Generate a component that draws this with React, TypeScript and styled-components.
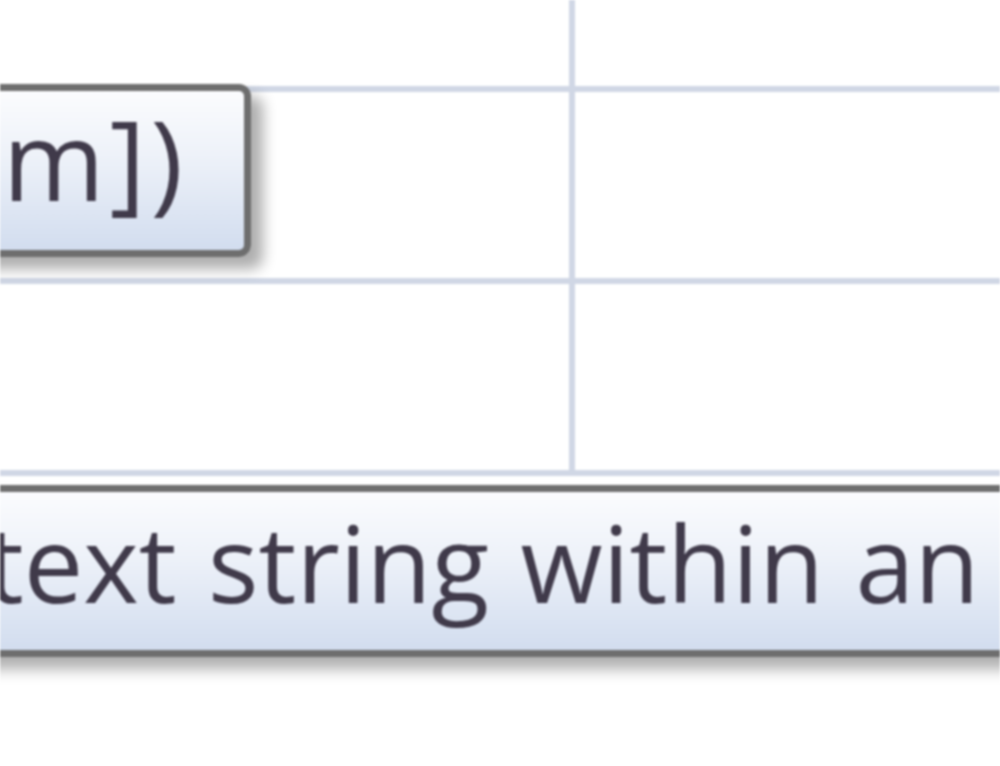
import styled, { createGlobalStyle } from 'styled-components';

const GlobalStyle = createGlobalStyle`
html, body {
  margin: 0;
  padding: 0;
  background: #ffffff;
  overflow: hidden;
}
`;

const Stage = styled.div`
position: relative;
width: 1000px;
height: 766px;
overflow: hidden;
background: #ffffff;
filter: blur(1px);
`;

const Sheet = styled.div`
display: grid;
grid-template-columns: 575px 1fr;
grid-auto-rows: 192px;
margin-top: -100px;
`;

const Cell = styled.div<{ $last?: boolean }>`
box-sizing: border-box;
border-bottom: 6px solid #d0d7e5;
border-right: ${(p) => (p.$last ? 'none' : '6px solid #d0d7e5')};
`;

const Tip = styled.div<{ $top: number; $width: number; $height: number; $round?: boolean }>`
position: absolute;
left: -40px;
top: ${(p) => p.$top}px;
width: ${(p) => p.$width}px;
height: ${(p) => p.$height}px;
box-sizing: border-box;
border: 7px solid #6e6e6e;
border-radius: ${(p) => (p.$round ? '12px' : '0')};
background: linear-gradient(to bottom, #fbfcfe 0%, #eef2f9 40%, #d2ddef 100%);
box-shadow: 12px 12px 14px rgba(0, 0, 0, 0.32);
font-family: "Open Sans", "Noto Sans", sans-serif;
color: #403a4a;
line-height: 1;
white-space: nowrap;
overflow: hidden;
`;

const ArgText = styled.div`
font-size: 110px;
letter-spacing: 5px;
text-align: right;
padding: 12px 56px 0 0;
`;

const HintText = styled.div`
font-size: 106px;
word-spacing: 4px;
padding: 17px 0 0 19px;
`;

const rows = [0, 1, 2];

const App = () => {
  return (
    <>
      <GlobalStyle />
      <Stage>
        <Sheet>
          {rows.map((r) => (
            <>
              <Cell key={`a${r}`} />
              <Cell key={`b${r}`} $last />
            </>
          ))}
        </Sheet>
        <Tip $top={84} $width={291} $height={173} $round>
          <ArgText>m])</ArgText>
        </Tip>
        <Tip $top={485} $width={1100} $height={172}>
          <HintText>text string within an</HintText>
        </Tip>
      </Stage>
    </>
  );
};

export default App;
